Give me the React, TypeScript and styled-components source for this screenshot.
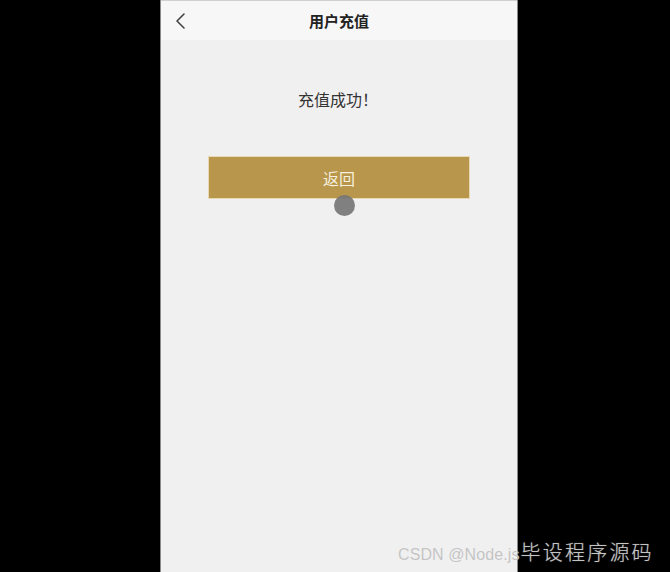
import React from "react";
import styled, { createGlobalStyle } from "styled-components";

const Global = createGlobalStyle`
  html, body { margin: 0; padding: 0; background: #000; }
  body { font-family: "Noto Sans CJK SC", "Liberation Sans", sans-serif; }
  #root { height: 572px; }
`;

const Stage = styled.div`
  position: relative;
  height: 572px;
  width: 670px;
  background: #000;
  display: flex;
  padding-left: 160px;
  box-sizing: border-box;
  overflow: hidden;
`;

const Phone = styled.div`
  width: 358px;
  height: 572px;
  box-sizing: border-box;
  border-left: 1px solid #8a8a8a;
  border-right: 1px solid #8a8a8a;
  background: #f0f0f0;
  display: flex;
  flex-direction: column;
`;

const NavBar = styled.div`
  height: 40px;
  flex: none;
  background: #f7f7f7;
  border-top: 1px solid #cfcfcf;
  box-sizing: border-box;
  display: grid;
  grid-template-columns: 40px 1fr 40px;
  align-items: center;
`;

const BackButton = styled.div`
  display: flex;
  align-items: center;
  justify-content: flex-start;
  padding-left: 13px;
  height: 100%;
`;

const Title = styled.div`
  text-align: center;
  font-size: 15px;
  font-weight: 700;
  color: #222;
`;

const Content = styled.div`
  display: flex;
  flex-direction: column;
  align-items: center;
  padding-top: 48px;
`;

const Message = styled.div`
  font-size: 16px;
  color: #333;
  line-height: 22px;
  margin-left: -2px;
`;

const ReturnButton = styled.div`
  position: relative;
  margin-top: 47px;
  width: 260px;
  height: 41px;
  background: #b8964b;
  box-shadow: 0 0 0 1px #e8d8b4;
  color: #f7f0de;
  font-size: 16px;
  display: flex;
  align-items: center;
  justify-content: center;
`;

const TouchDot = styled.div`
  position: absolute;
  left: 125px;
  top: 38px;
  width: 21px;
  height: 21px;
  border-radius: 50%;
  background: #777;
  opacity: 0.92;
  filter: blur(0.6px);
`;

const Watermark = styled.div`
  position: absolute;
  left: 398px;
  top: 541px;
  font-family: "Liberation Sans", "Noto Sans CJK SC", sans-serif;
  font-size: 16px;
  line-height: 22px;
  color: #c4c4c4;
  text-shadow: 0 0 1px rgba(255, 255, 255, 0.5);
  white-space: nowrap;
  letter-spacing: 0.1px;
`;

const WatermarkHan = styled.span`
  font-family: "Noto Sans CJK SC", sans-serif;
  font-size: 20px;
  font-weight: 300;
  letter-spacing: 2.2px;
  margin-left: 1px;
`;

export default function App() {
  return (
    <>
      <Global />
      <Stage>
        <Phone>
          <NavBar>
            <BackButton>
              <svg width="12" height="18" viewBox="0 0 12 18" fill="none">
                <path d="M10 2 L3 9 L10 16" stroke="#444" strokeWidth="1.6" strokeLinecap="round" strokeLinejoin="round" />
              </svg>
            </BackButton>
            <Title>用户充值</Title>
            <div />
          </NavBar>
          <Content>
            <Message>充值成功！</Message>
            <ReturnButton>
              返回
              <TouchDot />
            </ReturnButton>
          </Content>
        </Phone>
        <Watermark>
          CSDN @Node.js<WatermarkHan>毕设程序源码</WatermarkHan>
        </Watermark>
      </Stage>
    </>
  );
}
